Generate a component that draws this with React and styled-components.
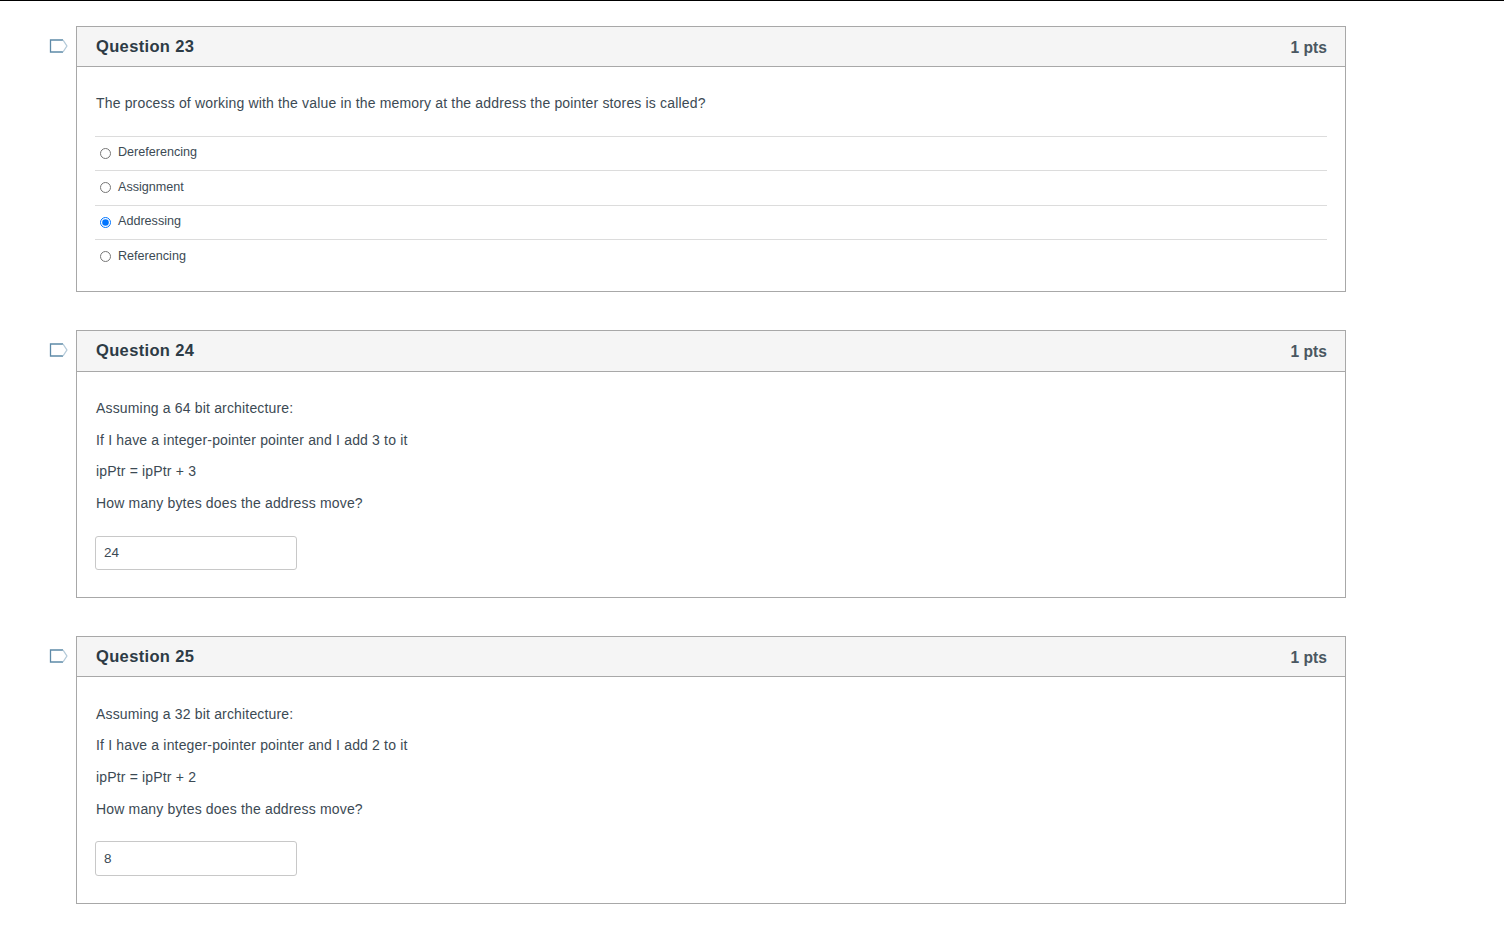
import React from 'react'
import styled, { createGlobalStyle } from 'styled-components'

const GlobalStyle = createGlobalStyle`
  html, body {
    margin: 0;
    background: #fff;
    color: #2d3b45;
    font-family: "Liberation Sans", Arial, sans-serif;
  }
`

const Page = styled.div`
  border-top: 1px solid #000;
  padding: 25px 158px 25px 49px;
  display: flex;
  flex-direction: column;
  gap: 38px;
`

const Row = styled.div`
  display: flex;
  align-items: flex-start;
`

const FlagBox = styled.div`
  width: 27px;
  height: 40px;
  flex: none;
  display: flex;
  align-items: center;
`

const Card = styled.section`
  flex: 1;
  border: 1px solid #a8a8a8;
  min-height: ${(p) => p.$height}px;
  box-sizing: border-box;
`

const Header = styled.header`
  height: ${(p) => p.$height}px;
  background: #f5f5f5;
  border-bottom: 1px solid #a8a8a8;
  padding: 0 18px 0 19px;
  display: flex;
  align-items: flex-start;
  justify-content: space-between;
`

const Title = styled.h2`
  margin: 10px 0 0;
  font-size: 16.5px;
  font-weight: 700;
  letter-spacing: 0.35px;
`

const Points = styled.span`
  margin-top: 12px;
  font-size: 15.6px;
  font-weight: 700;
  color: #4a5761;
`

const Body = styled.div`
  padding: ${(p) => p.$top}px 18px 0 18px;
`

const Text = styled.p`
  margin: 0 0 ${(p) => p.$gap ?? 15}px;
  padding-left: 1px;
  font-size: 14px;
  line-height: 16.6px;
  letter-spacing: 0.165px;
  color: #3c4a54;
`

const Options = styled.div`
  margin-top: 24px;
`

const Option = styled.label`
  display: flex;
  align-items: center;
  height: 33.5px;
  border-top: 1px solid #dcdcdc;
  font-size: 12.6px;
  color: #3c4a54;
`

const Radio = styled.input`
  margin: 0 7px 0 5px;
  width: 11px;
  height: 11px;
  flex: none;
`

const OptionText = styled.span`
  position: relative;
  top: -1px;
`

const Answer = styled.input`
  display: block;
  width: 202px;
  height: ${(p) => p.$height}px;
  margin-top: ${(p) => p.$gap}px;
  box-sizing: border-box;
  border: 1px solid #c8c8c8;
  border-radius: 3px;
  padding: 0 8px ${(p) => 36 - p.$height}px;
  font-family: "Liberation Sans", Arial, sans-serif;
  font-size: 13.5px;
  color: #3c4a54;
  background: #fff;
  outline: none;
`

function Flag() {
  return (
    <svg width="19" height="14" viewBox="0 0 19 14">
      <path d="M14 1H1.5v12H14" fill="none" stroke="#5e8aa8" strokeWidth="1.3" />
      <path d="M14 1l3.9 6-3.9 6" fill="none" stroke="#b4cad9" strokeWidth="1.3" />
    </svg>
  )
}

const choices = [
  { label: 'Dereferencing' },
  { label: 'Assignment' },
  { label: 'Addressing', checked: true },
  { label: 'Referencing' },
]

function Question({ number, height, headerHeight, children }) {
  return (
    <Row>
      <FlagBox><Flag /></FlagBox>
      <Card $height={height}>
        <Header $height={headerHeight}>
          <Title>Question {number}</Title>
          <Points>1 pts</Points>
        </Header>
        {children}
      </Card>
    </Row>
  )
}

function PointerQuestion({ number, headerHeight, top, inputHeight, inputGap, bits, add, answer }) {
  return (
    <Question number={number} height={268} headerHeight={headerHeight}>
      <Body $top={top}>
        <Text>Assuming a {bits} bit architecture:</Text>
        <Text>If I have a integer-pointer pointer and I add {add} to it</Text>
        <Text>ipPtr = ipPtr + {add}</Text>
        <Text>How many bytes does the address move?</Text>
        <Answer type="text" defaultValue={answer} $height={inputHeight} $gap={inputGap} />
      </Body>
    </Question>
  )
}

export default function App() {
  return (
    <>
      <GlobalStyle />
      <Page>
        <Question number={23} height={266} headerHeight={39}>
          <Body $top={28}>
            <Text $gap={0}>The process of working with the value in the memory at the address the pointer stores is called?</Text>
            <Options>
              {choices.map((item) => (
                <Option key={item.label}>
                  <Radio type="radio" name="q23" defaultChecked={item.checked} />
                  <OptionText>{item.label}</OptionText>
                </Option>
              ))}
            </Options>
          </Body>
        </Question>
        <PointerQuestion number={24} headerHeight={40} top={28} inputHeight={34} inputGap={25} bits={64} add={3} answer="24" />
        <PointerQuestion number={25} headerHeight={39} top={28.85} inputHeight={35} inputGap={24} bits={32} add={2} answer="8" />
      </Page>
    </>
  )
}
